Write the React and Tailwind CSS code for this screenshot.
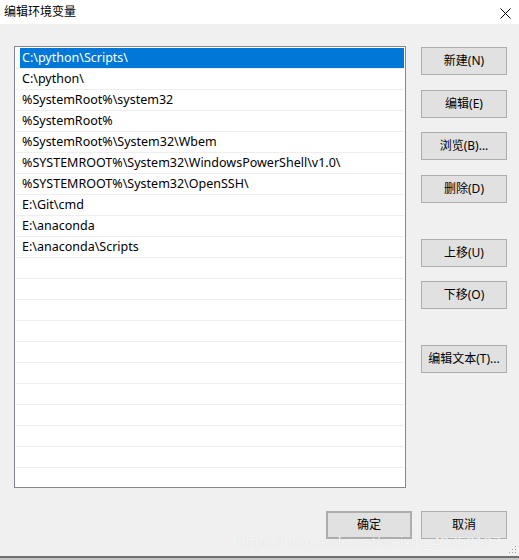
import React from "react";

const rows = [
  "C:\\python\\Scripts\\",
  "C:\\python\\",
  "%SystemRoot%\\system32",
  "%SystemRoot%",
  "%SystemRoot%\\System32\\Wbem",
  "%SYSTEMROOT%\\System32\\WindowsPowerShell\\v1.0\\",
  "%SYSTEMROOT%\\System32\\OpenSSH\\",
  "E:\\Git\\cmd",
  "E:\\anaconda",
  "E:\\anaconda\\Scripts",
];

const font = { fontFamily: '"Noto Sans", "Noto Sans CJK SC", sans-serif' };

function Btn({ children, className = "" }) {
  return (
    <div
      className={
        "w-[86px] h-[28px] flex items-center justify-center bg-[#e1e1e1] border border-[#adadad] text-[12px] text-black leading-none " +
        className
      }
    >
      {children}
    </div>
  );
}

export default function App() {
  const all = [...rows];
  while (all.length < 22) all.push("");
  return (
    <div
      className="relative w-[519px] h-[560px] flex flex-col bg-[#f0f0f0] overflow-hidden"
      style={font}
    >
      <div className="h-[24px] bg-white flex items-center justify-between pl-[4px] pr-[8px] shrink-0">
        <span className="text-[12px] text-black leading-none">编辑环境变量</span>
        <svg width="11" height="11" viewBox="0 0 11 11" className="mt-[2px]">
          <path d="M0.5 0.5 L10.5 10.5 M10.5 0.5 L0.5 10.5" stroke="#000" strokeWidth="1" />
        </svg>
      </div>
      <div className="flex-1 flex flex-col">
        <div className="flex pt-[22px] pl-[14px]">
          <div className="w-[392px] h-[442px] border border-[#828790] bg-white pt-[1px] pl-[1px] pr-[1px] overflow-hidden">
            {all.map((r, i) => (
              <div key={i} className="h-[21px] border-b border-[#eeeeee] flex">
                <div
                  className={
                    "h-[20px] ml-[4px] flex-1 flex items-center pl-[2px] text-[12.5px] leading-none whitespace-nowrap " +
                    (i === 0 ? "bg-[#0078d7] text-white" : "text-black")
                  }
                >
                  {r}
                </div>
              </div>
            ))}
          </div>
          <div className="ml-[15px] pt-[1px] flex flex-col">
            <Btn>新建(N)</Btn>
            <Btn className="mt-[15px]">编辑(E)</Btn>
            <Btn className="mt-[14px]">浏览(B)...</Btn>
            <Btn className="mt-[15px]">删除(D)</Btn>
            <Btn className="mt-[36px]">上移(U)</Btn>
            <Btn className="mt-[14px]">下移(O)</Btn>
            <Btn className="mt-[36px]">编辑文本(T)...</Btn>
          </div>
        </div>
        <div className="flex justify-end pr-[12px] mt-[23px] gap-[9px]">
          <Btn className="border-2 border-[#0078d7]">确定</Btn>
          <Btn>取消</Btn>
        </div>
      </div>
      <svg width="8" height="8" viewBox="0 0 8 8" className="absolute right-[2px] bottom-[6px]">
        <rect x="6" y="0" width="1" height="1" fill="#a0a0a0" />
        <rect x="3" y="3" width="1" height="1" fill="#a0a0a0" />
        <rect x="6" y="3" width="1" height="1" fill="#a0a0a0" />
        <rect x="0" y="6" width="1" height="1" fill="#a0a0a0" />
        <rect x="3" y="6" width="1" height="1" fill="#a0a0a0" />
        <rect x="6" y="6" width="1" height="1" fill="#a0a0a0" />
      </svg>
      <div className="h-[4px] shrink-0 border-t-2 border-[#6f6f6f] bg-[#c4c4c4]" />
      <div
        className="absolute left-[237px] top-[534px] text-[15.5px] leading-none text-white/80 whitespace-nowrap"
        style={{ fontFamily: '"Liberation Sans", sans-serif', textShadow: "0 0 1px rgba(0,0,0,0.15)" }}
      >
        https://blog.csdn.net/weixin_43753197
      </div>
    </div>
  );
}
